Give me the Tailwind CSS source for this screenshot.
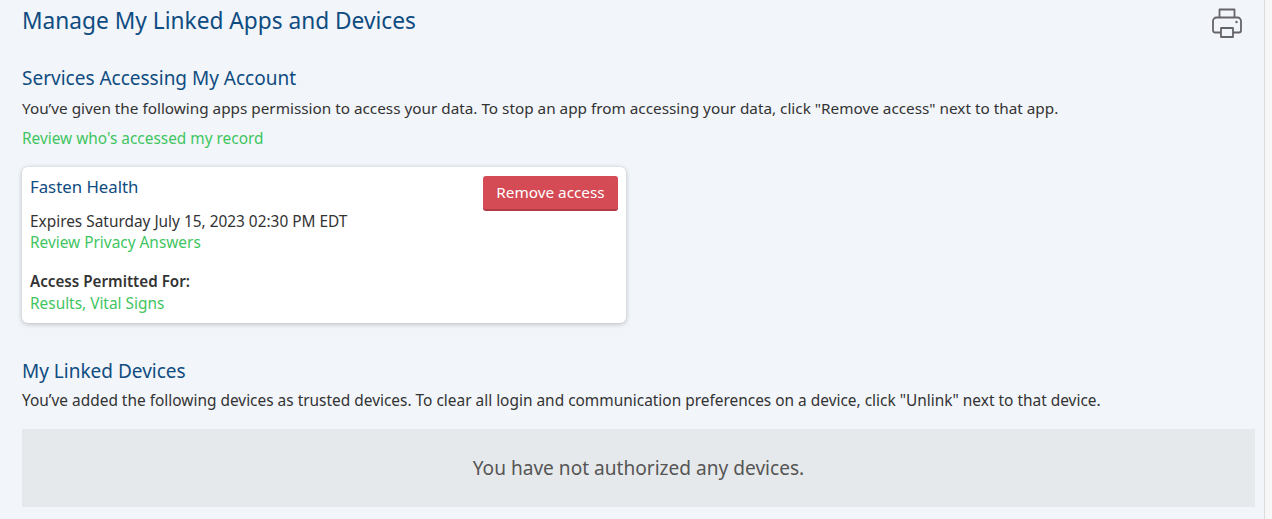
<!DOCTYPE html>
<html lang="en">
  <head>
    <meta charset="UTF-8" />
    <title>Manage My Linked Apps and Devices</title>
    <script src="https://cdn.jsdelivr.net/npm/@tailwindcss/browser@4"></script>
  </head>
  <body class="h-[519px] overflow-hidden bg-[#f7f7f7] font-['Noto_Sans',sans-serif] text-[#333]">
    <div class="flex h-full">
      <main class="h-full w-[1265px] border-r border-[#dcdcdc] bg-[#f2f5fa] pl-[22px] pr-[10px]">
        <div class="flex h-[41px] items-start justify-between">
          <h1 class="mt-[5px] text-[22.700px] leading-[31px] text-[#0f4c81]">Manage My Linked Apps and Devices</h1>
          <svg class="mt-[7px] mr-[12px] h-[32px] w-[32px] text-[#66646b]" viewBox="0 0 32 32" fill="none" stroke="currentColor" stroke-width="1.800" stroke-linejoin="round">
            <path d="M9.500 10.500V2.500h15v8" />
            <path d="M11 25.500H5a2 2 0 0 1-2-2V14a3.500 3.500 0 0 1 3.500-3.500h21a3.500 3.500 0 0 1 3.500 3.500v9.500a2 2 0 0 1-2 2h-6" />
            <path d="M11 21h12v9H11z" />
            <circle cx="26.500" cy="15" r="1.200" fill="currentColor" stroke="none" />
          </svg>
        </div>
        <h2 class="mt-[23px] text-[19px] leading-[28px] text-[#0f4c81]">Services Accessing My Account</h2>
        <p class="mt-[5px] text-[15.300px] leading-[22px]">You’ve given the following apps permission to access your data. To stop an app from accessing your data, click "Remove access" next to that app.</p>
        <a class="mt-[9px] block text-[15.400px] leading-[22px] text-[#3fc55f]">Review who's accessed my record</a>

        <section class="mt-[17px] flex h-[156px] w-[604px] justify-between rounded-[6px] bg-white pt-[8px] pr-[8px] pl-[8px] shadow-[0_1px_5px_rgba(0,0,0,0.25)]">
          <div>
            <h3 class="text-[16.800px] leading-[24px] text-[#0f4c81]">Fasten Health</h3>
            <p class="mt-[12px] text-[15.400px] leading-[21px]">Expires Saturday July 15, 2023 02:30 PM EDT</p>
            <a class="block text-[15.400px] leading-[21px] text-[#3fc55f]">Review Privacy Answers</a>
            <p class="mt-[17px] text-[15.200px] leading-[22px] font-semibold">Access Permitted For:</p>
            <a class="mt-[1px] block text-[15.400px] leading-[21px] text-[#3fc55f]">Results, Vital Signs</a>
          </div>
          <button class="mt-[1px] h-[35px] w-[135px] rounded-[3px] border-b-2 border-[#b13a44] bg-[#d44b55] text-[15.300px] text-white">Remove access</button>
        </section>

        <h2 class="mt-[34px] text-[19px] leading-[28px] text-[#0f4c81]">My Linked Devices</h2>
        <p class="mt-[5px] text-[15.430px] leading-[22px]">You’ve added the following devices as trusted devices. To clear all login and communication preferences on a device, click "Unlink" next to that device.</p>
        <div class="mt-[17px] flex h-[78px] w-[1233px] items-center justify-center bg-[#e6e9eb] text-[19.100px] text-[#555]">You have not authorized any devices.</div>
      </main>
    </div>
  </body>
</html>
